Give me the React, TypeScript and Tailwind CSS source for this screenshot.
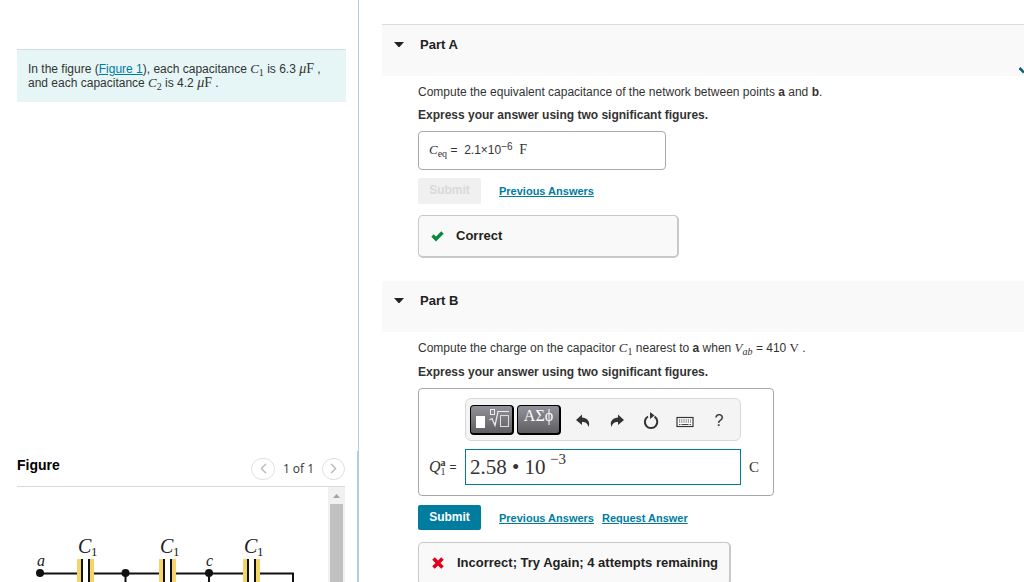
import { useState } from "react";
import type { ReactNode } from "react";
import { ChevronLeft, ChevronRight } from "lucide-react";

const math = "font-['Liberation_Serif',serif]";

function Sym({ name, sub }: { name: string; sub: string }) {
  return (
    <span className={`${math} text-[13px] leading-none`}>
      <i>{name}</i>
      <span className="relative top-[3px] text-[10px] leading-none">{sub}</span>
    </span>
  );
}

function Capacitor({ x }: { x: number }) {
  return (
    <g>
      <rect x={x} y="72" width="17" height="30" fill="#f5d56a" />
      <rect x={x + 4} y="72" width="9" height="30" fill="#111" />
      <rect x={x + 6} y="72" width="5" height="30" fill="#fff" />
      <text x={x + 1} y="66" fontSize="20" fontStyle="italic">C</text>
      <text x={x + 14} y="69" fontSize="13">1</text>
    </g>
  );
}

function Circuit() {
  return (
    <svg
      viewBox="0 0 311 95"
      width="311"
      height="95"
      className="shrink-0"
      fontFamily="'Liberation Serif', serif"
      fill="#222"
      role="img"
      aria-label="Capacitor network"
    >
      <path d="M23 86.500H276V95M108.500 86V95M192 86V95" fill="none" stroke="#111" strokeWidth="2" />
      <Capacitor x={60} />
      <Capacitor x={142} />
      <Capacitor x={226} />
      <circle cx="23" cy="86" r="4" fill="#111" />
      <circle cx="108.500" cy="86" r="4" fill="#111" />
      <circle cx="192" cy="86" r="4" fill="#111" />
      <text x="20" y="79" fontSize="16" fontStyle="italic">a</text>
      <text x="189" y="79" fontSize="16" fontStyle="italic">c</text>
    </svg>
  );
}

function FigurePanel() {
  return (
    <section className="flex h-[131px] shrink-0 flex-col border-r border-[#b5cbdf] pl-[17px] pr-[12px]">
      <div className="flex h-[36px] shrink-0 items-center border-b border-[#d9d9d9]">
        <h2 className="mb-2 flex-1 text-[14px] font-bold text-black">Figure</h2>
        <button aria-label="Previous figure" className="flex h-[22px] w-[24px] items-center justify-center rounded-full border border-[#e0e0e0] text-[#bbb]">
          <ChevronLeft size={17} />
        </button>
        <span className="w-[47px] text-center font-['Open_Sans',sans-serif] text-[12px] text-[#333]">1 of 1</span>
        <button aria-label="Next figure" className="flex h-[22px] w-[23px] items-center justify-center rounded-full border border-[#e0e0e0] text-[#bbb]">
          <ChevronRight size={17} />
        </button>
      </div>
      <div className="flex min-h-0 flex-1 justify-between overflow-hidden">
        <Circuit />
        <div className="flex w-[17px] shrink-0 flex-col items-center bg-[#f1f1f1]">
          <svg width="7" height="17" viewBox="0 0 7 17" className="shrink-0">
            <path d="M0 11L3.500 7L7 11Z" fill="#a3a3a3" />
          </svg>
          <div className="w-[13px] flex-1 bg-[#c1c1c1]" />
        </div>
      </div>
    </section>
  );
}

function Part({ title, children }: { title: string; children: ReactNode }) {
  const [open, setOpen] = useState(true);

  return (
    <section>
      <h2 className="bg-[#f9f9f9]">
        <button
          onClick={() => setOpen(!open)}
          aria-expanded={open}
          className="flex h-[51px] w-full items-start gap-4 pl-[12px] pt-[10px] text-[13px] font-bold leading-5 text-[#222]"
        >
          <svg width="10" height="20" viewBox="0 0 10 20">
            <path d="M0 7H10L5.500 12H4.500Z" fill="#222" />
          </svg>
          {title}
        </button>
      </h2>
      {open && <div className="pl-[36px] pt-2">{children}</div>}
    </section>
  );
}

function Feedback({ icon, className, children }: { icon: ReactNode; className: string; children: ReactNode }) {
  return (
    <div
      className={`flex h-[43px] items-center gap-[12px] rounded-[5px] border border-b-2 border-r-2 border-[#c8c8c8] bg-[#f9f9f9] pl-[12px] text-[13px] font-bold text-[#222] ${className}`}
    >
      {icon}
      {children}
    </div>
  );
}

function CheckIcon() {
  return (
    <svg width="13" height="12" viewBox="0 0 13 12">
      <path d="M1.500 5.500L5 9L11.500 2.500" fill="none" stroke="#078a3e" strokeWidth="3.400" />
    </svg>
  );
}

function CrossIcon() {
  return (
    <svg width="14" height="14" viewBox="0 0 14 14">
      <path d="M2.500 2.500L11.500 11.500M11.500 2.500L2.500 11.500" fill="none" stroke="#e0001b" strokeWidth="3.600" />
    </svg>
  );
}

const link = "text-[11px] font-bold leading-[14px] text-[#007c9f] underline";

const curvedArrow = "M8 0.500L14 6L8 11V8C4.500 8 2.500 9 1.500 13C-0.500 8 2 4 8 3.500Z";

function Toolbar() {
  const dark =
    "flex h-[30px] w-[44px] items-center justify-center rounded-[4px] border border-b-2 border-r-2 border-black bg-linear-to-b from-[#92929a] to-[#5f5f62] text-white";
  const tool = "flex h-[30px] w-[34px] items-center justify-center pt-[3px] text-[#333]";
  return (
    <div className="flex h-[43px] items-center rounded-[6px] border border-[#d8d8d8] bg-[#f4f4f4] pl-1">
      <button aria-label="Templates" className={dark}>
        <svg width="34" height="22" viewBox="0 0 34 22">
          <rect x="1" y="8" width="9" height="12" fill="#fff" />
          <path d="M14.500 12L17 10.500L20 17.500L23 3.500H34" fill="none" stroke="#eee" strokeWidth="1.200" />
          <rect x="15.500" y="1.500" width="4" height="5" fill="none" stroke="#eee" />
          <rect x="25.500" y="7.500" width="8" height="11" fill="none" stroke="#ddd" />
        </svg>
      </button>
      <button aria-label="Symbols" className={`${dark} ${math} ml-[3px] mr-[5px] pb-1.5 text-[16px]`}>ΑΣϕ</button>
      <button aria-label="Undo" className={tool}>
        <svg width="14" height="14" viewBox="0 0 14 14">
          <path d={curvedArrow} transform="matrix(-1 0 0 1 14 0)" fill="#333" />
        </svg>
      </button>
      <button aria-label="Redo" className={tool}>
        <svg width="14" height="14" viewBox="0 0 14 14">
          <path d={curvedArrow} fill="#333" />
        </svg>
      </button>
      <button aria-label="Reset" className={tool}>
        <svg width="16" height="18" viewBox="0 0 16 18">
          <path d="M11.500 4.700A6.200 6.200 0 1 1 5 4.500" fill="none" stroke="#333" strokeWidth="2" />
          <path d="M7 0L11.500 3.500L7 7Z" fill="#333" />
        </svg>
      </button>
      <button aria-label="Keyboard shortcuts" className={tool}>
        <svg width="18" height="14" viewBox="0 0 18 14">
          <rect x="1" y="3.500" width="16" height="9" fill="#fff" stroke="#333" strokeWidth="1.200" />
          <path d="M3 6H15M3 8H15" stroke="#444" strokeWidth="1.200" strokeDasharray="1.200 1" />
          <path d="M3 10.500H4.500M5.500 10.500H12.500M13.500 10.500H15" stroke="#444" />
        </svg>
      </button>
      <button aria-label="Help" className={`${tool} text-[16px]`}>?</button>
    </div>
  );
}

function AnswerEditor() {
  const [base, setBase] = useState("2.58 • 10");
  const [exponent, setExponent] = useState("−3");

  return (
    <div className="mt-2 grid w-full max-w-[356px] grid-cols-[28px_1fr_24px] items-center gap-x-2 gap-y-2 rounded-[4px] border border-[#a9a9a9] pb-[10px] pl-[10px] pt-[9px]">
      <div className="col-start-2"><Toolbar /></div>
      <label htmlFor="charge" className="col-start-1 flex items-center whitespace-nowrap text-[12px]">
        <i className={`${math} text-[16px]`}>Q</i>
        <span className={`${math} mr-1 flex flex-col text-[10px] leading-[9px]`}>
          <b>a</b>
          <span>1</span>
        </span>
        =
      </label>
      <div className={`${math} flex h-[36px] items-center border border-[#007c9f] bg-white pl-1 text-[#333]`}>
        <input
          id="charge"
          value={base}
          onChange={(e) => setBase(e.target.value)}
          className="w-[80px] text-[21px] outline-none"
        />
        <input
          aria-label="Exponent"
          value={exponent}
          onChange={(e) => setExponent(e.target.value)}
          className="mb-4 min-w-0 flex-1 text-[15px] outline-none"
        />
      </div>
      <span className={`${math} text-[15px]`}>C</span>
    </div>
  );
}

export default function App() {
  return (
    <div className="flex h-screen overflow-hidden bg-white font-['Liberation_Sans',Arial,sans-serif] text-[12px] leading-4 text-[#333]">
      <aside className="flex w-[35%] min-w-[359px] max-w-[359px] flex-col border-r border-[#b5cbdf]">
        <div className="flex-1 pl-[17px] pr-[12px] pt-[49px]">
          <p className="border-t border-[#d5dcdc] bg-[#e6f6f6] px-[11px] py-3 leading-[14px]">
            In the figure (<a href="#figure" className="text-[#007c9f] underline">Figure 1</a>), each capacitance{" "}
            <Sym name="C" sub="1" /> is 6.3 <span className={`${math} text-[14px] leading-none`}><i>μ</i>F</span> ,
            <br />
            and each capacitance <Sym name="C" sub="2" /> is 4.2{" "}
            <span className={`${math} text-[14px] leading-none`}><i>μ</i>F</span> .
          </p>
        </div>
        <FigurePanel />
      </aside>

      <main className="min-w-0 flex-1 overflow-hidden pl-[23px] pt-6">
        <div className="relative border-t border-[#dcdcdc]">
          <Part title="Part A">
            <p>
              Compute the equivalent capacitance of the network between points <b>a</b> and <b>b</b>.
            </p>
            <p className="mt-[7px] font-bold">Express your answer using two significant figures.</p>
            <div className="mt-2 flex h-[39px] w-full max-w-[248px] items-center rounded-[4px] border border-[#a9a9a9] px-[10px]">
              <span className="whitespace-pre">
                <Sym name="C" sub="eq" /> =  2.1×10<span className="relative -top-1 text-[10px]">−6</span>
                {"  "}
                <span className={`${math} text-[14px]`}>F</span>
              </span>
            </div>
            <div className="mt-2 flex items-center gap-[18px]">
              <button disabled className="h-[26px] w-[63px] rounded-[2px] bg-[#f0f0f0] pb-0.5 font-bold text-[#d9d9d9]">Submit</button>
              <a href="#previous-a" className={link}>Previous Answers</a>
            </div>
            <Feedback icon={<CheckIcon />} className="mt-[11px] max-w-[261px]">
              Correct
            </Feedback>
          </Part>
          <svg width="5" height="8" viewBox="0 0 5 8" className="absolute right-0 top-[42px]">
            <path d="M0.500 1L5 5.500" stroke="#00607a" strokeWidth="2.500" />
          </svg>
        </div>

        <div className="mt-[23px]">
          <Part title="Part B">
            <p>
              Compute the charge on the capacitor <Sym name="C" sub="1" /> nearest to <b>a</b> when{" "}
              <span className={`${math} text-[13px] leading-none`}>
                <i>V</i>
                <i className="relative top-[3px] text-[10px] leading-none">ab</i>
              </span>{" "}
              = 410 <span className={`${math} text-[13px] leading-none`}>V</span> .
            </p>
            <p className="mt-2 font-bold">Express your answer using two significant figures.</p>
            <AnswerEditor />
            <div className="mb-3 mt-[9px] flex items-center">
              <button className="h-[25px] w-[63px] rounded-[2px] bg-[#007c9f] pb-0.5 font-bold text-white">Submit</button>
              <a href="#previous-b" className={`${link} ml-[18px]`}>Previous Answers</a>
              <a href="#request-b" className={`${link} ml-2`}>Request Answer</a>
            </div>
            <Feedback icon={<CrossIcon />} className="w-fit pr-[11px]">
              Incorrect; Try Again; 4 attempts remaining
            </Feedback>
          </Part>
        </div>
      </main>
    </div>
  );
}
